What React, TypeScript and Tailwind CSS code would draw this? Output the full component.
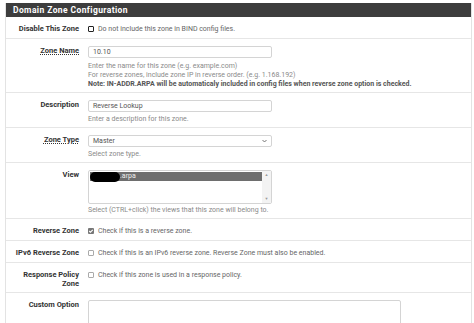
import React from "react";

const font = { fontFamily: "Roboto, 'Liberation Sans', sans-serif" };

function Label({ children, u }: { children: React.ReactNode; u?: boolean }) {
  return (
    <div className="w-[75px] shrink-0 pr-[2px] text-right font-bold text-[7.5px] leading-[9px] text-[#333]">
      <span className={u ? "underline decoration-dotted decoration-[#333] underline-offset-[1px]" : ""}>{children}</span>
    </div>
  );
}

function Row({ children, label, u, pb = "pb-[3px]" }: { children: React.ReactNode; label: React.ReactNode; u?: boolean; pb?: string }) {
  return (
    <div className={"flex border-b border-[#e6e6e6] pt-[7px] " + pb}>
      <Label u={u}>{label}</Label>
      <div className="ml-[7px] flex-1">{children}</div>
    </div>
  );
}

function Help({ children, b }: { children: React.ReactNode; b?: boolean }) {
  return <div className={"whitespace-nowrap text-[7px] leading-[9px] " + (b ? "font-bold text-[#555]" : "text-[#8a8a8a]")}>{children}</div>;
}

function Box({ checked, dark }: { checked?: boolean; dark?: boolean }) {
  if (checked)
    return (
      <span className="mr-[4px] inline-flex h-[6px] w-[6px] items-center justify-center rounded-[1px] bg-[#777]">
        <svg width="6" height="6" viewBox="0 0 10 10"><path d="M2 5l2 2 4-4" stroke="#fff" strokeWidth="1.8" fill="none" /></svg>
      </span>
    );
  return (
    <span
      className={
        "mr-[4px] inline-block h-[6px] w-[6px] rounded-[1px] " +
        (dark ? "border-[1.5px] border-[#222]" : "border border-[#aaa]")
      }
    />
  );
}

function Check({ children, checked, dark }: { children: React.ReactNode; checked?: boolean; dark?: boolean }) {
  return (
    <div className="flex h-[10px] items-center whitespace-nowrap text-[7px] text-[#666]">
      <Box checked={checked} dark={dark} />
      {children}
    </div>
  );
}

function Input({ value }: { value: string }) {
  return (
    <div className="flex h-[12px] w-[184px] items-center rounded-[2px] border border-[#d4d4d4] px-[4px] text-[7px] text-[#555]">
      {value}
    </div>
  );
}

export default function App() {
  return (
    <div className="h-[323px] w-[474px] overflow-hidden bg-white pt-[3px] pl-[5px] pr-[2px]" style={font}>
      <div className="border-x border-[#e3e3e3]">
        <div className="flex h-[14px] items-center bg-[#3d3d3d] pl-[7px] text-[8.5px] font-bold tracking-[0.4px] text-white">
          Domain Zone Configuration
        </div>

        <Row label="Disable This Zone" pb="pb-[4px]">
          <Check dark>Do not include this zone in BIND config files.</Check>
        </Row>

        <Row label="Zone Name" u>
          <Input value="10.10" />
          <div className="mt-[4px]">
            <Help>Enter the name for this zone (e.g. example.com)</Help>
            <Help>For reverse zones, include zone IP in reverse order. (e.g. 1.168.192)</Help>
            <Help b>Note: IN-ADDR.ARPA will be automaticaly included in config files when reverse zone option is checked.</Help>
          </div>
        </Row>

        <Row label="Description">
          <Input value="Reverse Lookup" />
          <div className="mt-[3px]">
            <Help>Enter a description for this zone.</Help>
          </div>
        </Row>

        <Row label="Zone Type" u>
          <div className="flex h-[12px] w-[184px] items-center justify-between rounded-[2px] border border-[#d4d4d4] px-[4px] text-[7px] text-[#555]">
            Master
            <svg width="5" height="4" viewBox="0 0 10 8"><path d="M1 2l4 4 4-4" stroke="#666" strokeWidth="1.8" fill="none" /></svg>
          </div>
          <div className="mt-[3px]">
            <Help>Select zone type.</Help>
          </div>
        </Row>

        <Row label="View">
          <div className="flex h-[34px] w-[184px] rounded-[2px] border border-[#d4d4d4]">
            <div className="flex-1 pt-[1px] pl-[1px]">
              <div className="flex h-[9px] items-center bg-[#6e6e6e] text-[7px] text-[#eee]">
                <span className="h-[10px] w-[30px] rounded-full bg-black" />
                <span>.arpa</span>
              </div>
            </div>
            <div className="flex w-[9px] flex-col items-center justify-between bg-[#f3f3f3] py-[2px] text-[4px] leading-[4px] text-[#999]">
              <span>▲</span>
              <span>▼</span>
            </div>
          </div>
          <div className="mt-[2px]">
            <Help>Select (CTRL+click) the views that this zone will belong to.</Help>
          </div>
        </Row>

        <Row label="Reverse Zone" pb="pb-[4px]">
          <Check checked>Check if this is a reverse zone.</Check>
        </Row>

        <Row label="IPv6 Reverse Zone" pb="pb-[4px]">
          <Check>Check if this is an IPv6 reverse zone. Reverse Zone must also be enabled.</Check>
        </Row>

        <Row label={<>Response Policy<br />Zone</>} pb="pb-[4px]">
          <Check>Check if this zone is used in a response policy.</Check>
        </Row>

        <div className="flex pt-[7px]">
          <Label>Custom Option</Label>
          <div className="ml-[7px] flex-1">
            <div className="h-[40px] w-[313px] rounded-[2px] border border-[#d4d4d4]" />
          </div>
        </div>
      </div>
    </div>
  );
}
